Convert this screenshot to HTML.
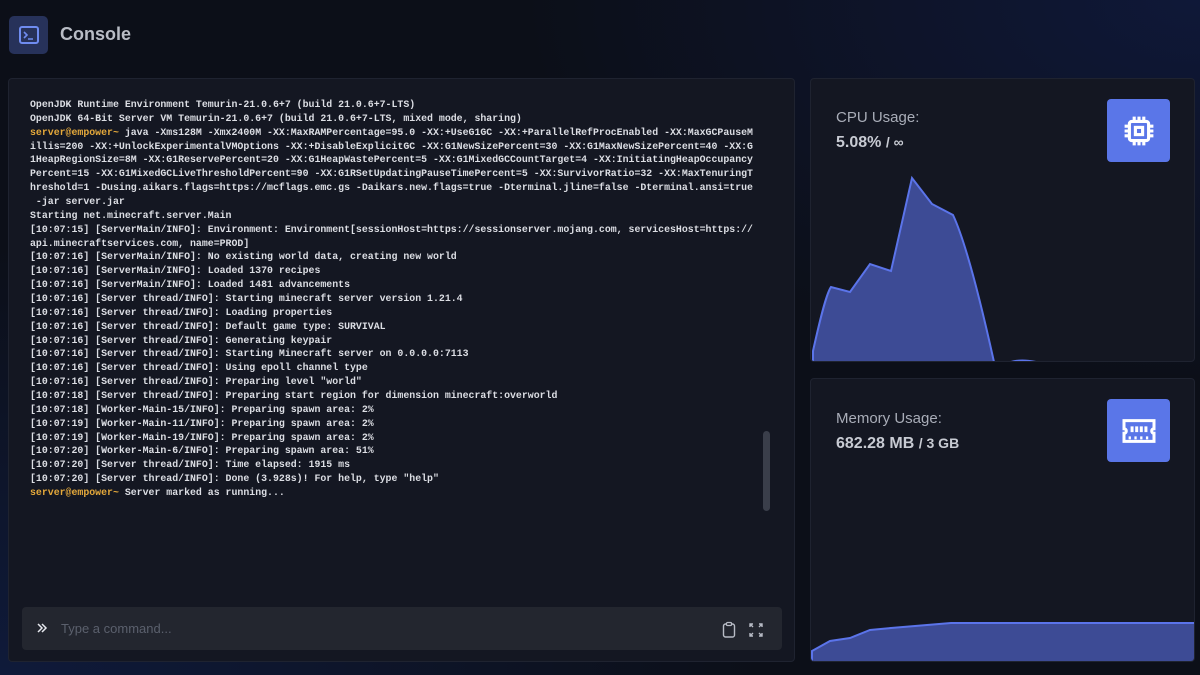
<!DOCTYPE html>
<html><head><meta charset="utf-8"><style>
*{margin:0;padding:0;box-sizing:border-box}
body{width:1200px;height:675px;overflow:hidden;position:relative;font-family:"Liberation Sans",sans-serif;
background:radial-gradient(ellipse at 0% 100%,#0f1a3a 0%,rgba(15,26,58,0) 45%),radial-gradient(ellipse at 100% 0%,#0f1838 0%,rgba(15,24,56,0) 40%),#0c0f18;}
.hicon{position:absolute;left:9px;top:16px;width:39px;height:38px;border-radius:5px;background:#27325a;display:flex;align-items:center;justify-content:center}
.title{position:absolute;left:60px;top:24px;font-size:18px;color:#b9bcc5;font-weight:bold}
.panel{position:absolute;background:#141722;border:1px solid #1f2330;border-radius:4px;overflow:hidden}
pre{position:absolute;left:30px;top:98px;font-family:"Liberation Mono",monospace;font-size:9.9px;line-height:13.86px;color:#dcdee4;font-weight:bold;white-space:pre}
.y{color:#e5a93b}
.input{position:absolute;left:22px;top:607px;width:760px;height:43px;background:#23262f;border-radius:4px}
.ph{position:absolute;left:39px;top:14px;font-size:13px;color:#5b606d}
.lbl{position:absolute;left:25px;font-size:15px;color:#a9adb8}
.val{position:absolute;left:25px;font-size:16px;color:#c8cbd3;font-weight:bold}
.val small{font-size:14px}
.ibox{position:absolute;left:296px;top:20px;width:63px;height:63px;background:#5a76e8;border-radius:4px;display:flex;align-items:center;justify-content:center}
</style></head><body>
<div class="hicon"><svg width="22" height="22" viewBox="0 0 22 22"><rect x="2" y="3" width="18" height="16" rx="2" fill="none" stroke="#6f8cf0" stroke-width="2"/><path d="M6 8l3 3-3 3M10 15h5" fill="none" stroke="#6f8cf0" stroke-width="1.6"/></svg></div>
<div class="title">Console</div>
<div class="panel" style="left:8px;top:78px;width:787px;height:584px">
<div style="position:absolute;left:754px;top:352px;width:7px;height:80px;border-radius:4px;background:#3a3e4a"></div>
</div>
<pre>OpenJDK Runtime Environment Temurin-21.0.6+7 (build 21.0.6+7-LTS)
OpenJDK 64-Bit Server VM Temurin-21.0.6+7 (build 21.0.6+7-LTS, mixed mode, sharing)
<span class="y">server@empower~</span> java -Xms128M -Xmx2400M -XX:MaxRAMPercentage=95.0 -XX:+UseG1GC -XX:+ParallelRefProcEnabled -XX:MaxGCPauseM
illis=200 -XX:+UnlockExperimentalVMOptions -XX:+DisableExplicitGC -XX:G1NewSizePercent=30 -XX:G1MaxNewSizePercent=40 -XX:G
1HeapRegionSize=8M -XX:G1ReservePercent=20 -XX:G1HeapWastePercent=5 -XX:G1MixedGCCountTarget=4 -XX:InitiatingHeapOccupancy
Percent=15 -XX:G1MixedGCLiveThresholdPercent=90 -XX:G1RSetUpdatingPauseTimePercent=5 -XX:SurvivorRatio=32 -XX:MaxTenuringT
hreshold=1 -Dusing.aikars.flags=https://mcflags.emc.gs -Daikars.new.flags=true -Dterminal.jline=false -Dterminal.ansi=true
 -jar server.jar
Starting net.minecraft.server.Main
[10:07:15] [ServerMain/INFO]: Environment: Environment[sessionHost=https://sessionserver.mojang.com, servicesHost=https://
api.minecraftservices.com, name=PROD]
[10:07:16] [ServerMain/INFO]: No existing world data, creating new world
[10:07:16] [ServerMain/INFO]: Loaded 1370 recipes
[10:07:16] [ServerMain/INFO]: Loaded 1481 advancements
[10:07:16] [Server thread/INFO]: Starting minecraft server version 1.21.4
[10:07:16] [Server thread/INFO]: Loading properties
[10:07:16] [Server thread/INFO]: Default game type: SURVIVAL
[10:07:16] [Server thread/INFO]: Generating keypair
[10:07:16] [Server thread/INFO]: Starting Minecraft server on 0.0.0.0:7113
[10:07:16] [Server thread/INFO]: Using epoll channel type
[10:07:16] [Server thread/INFO]: Preparing level "world"
[10:07:18] [Server thread/INFO]: Preparing start region for dimension minecraft:overworld
[10:07:18] [Worker-Main-15/INFO]: Preparing spawn area: 2%
[10:07:19] [Worker-Main-11/INFO]: Preparing spawn area: 2%
[10:07:19] [Worker-Main-19/INFO]: Preparing spawn area: 2%
[10:07:20] [Worker-Main-6/INFO]: Preparing spawn area: 51%
[10:07:20] [Server thread/INFO]: Time elapsed: 1915 ms
[10:07:20] [Server thread/INFO]: Done (3.928s)! For help, type "help"
<span class="y">server@empower~</span> Server marked as running...</pre>
<div class="input">
<svg style="position:absolute;left:14px;top:15px" width="12" height="12" viewBox="0 0 12 12"><path d="M2 2l4 4-4 4M6 2l4 4-4 4" fill="none" stroke="#e6e8ee" stroke-width="1.5"/></svg>
<div class="ph">Type a command...</div>
<svg style="position:absolute;left:699px;top:14px" width="16" height="17" viewBox="0 0 16 17"><rect x="2.5" y="3" width="11" height="13" rx="2" fill="none" stroke="#b8bcc6" stroke-width="1.4"/><rect x="5.5" y="1.5" width="5" height="3" rx="1" fill="#23262f" stroke="#b8bcc6" stroke-width="1.2"/></svg>
<svg style="position:absolute;left:726px;top:15px" width="16" height="16" viewBox="0 0 16 16"><path d="M2 5V2h3M11 2h3v3M14 11v3h-3M5 14H2v-3M2 2l3 3M14 2l-3 3M14 14l-3-3M2 14l3-3" fill="none" stroke="#b8bcc6" stroke-width="1.4"/></svg>
</div>
<div class="panel" style="left:810px;top:78px;width:385px;height:284px">
<div class="lbl" style="top:30px">CPU Usage:</div>
<div class="val" style="top:55px">5.08% <small>/ ∞</small></div>
<div class="ibox"><svg width="36" height="36" viewBox="0 0 30 30" fill="none" stroke="#fff" stroke-width="2.6"><rect x="7" y="7" width="16" height="16" rx="2"/><rect x="12" y="12" width="6" height="6"/><path d="M11 3v4M15 3v4M19 3v4M11 23v4M15 23v4M19 23v4M3 11h4M3 15h4M3 19h4M23 11h4M23 15h4M23 19h4"/></svg></div>
<svg style="position:absolute;left:0;top:0" width="385" height="284"><path d="M2 272 C8 245 15 215 20 208 L39 213 L59 185 L80 192 L101 99 L121 125 L142 136 Q158 170 183 283 L183 284 L2 284Z" fill="#3d4b95" stroke="#5b74ea" stroke-width="2"/><path d="M200 283 Q210 280 225 283" fill="none" stroke="#5b74ea" stroke-width="2"/></svg>
</div>
<div class="panel" style="left:810px;top:378px;width:385px;height:284px">
<div class="lbl" style="top:31px">Memory Usage:</div>
<div class="val" style="top:56px">682.28 MB <small>/ 3 GB</small></div>
<div class="ibox"><svg width="40" height="30" viewBox="0 0 34 26" fill="none" stroke="#fff" stroke-width="2.6"><path d="M4 4h26v7a2 2 0 0 0 0 4v7H4v-7a2 2 0 0 0 0-4z"/><path d="M11 9v5M15 9v5M19 9v5M23 9v5M8 19h2M13 19h2M18 19h2M23 19h2"/></svg></div>
<svg style="position:absolute;left:0;top:0" width="385" height="284"><path d="M1 272 L19 262 L39 259 L59 251 L80 249 L140 244 L385 244 L385 284 L1 284Z" fill="#3d4b95" stroke="#5b74ea" stroke-width="2"/></svg>
</div>
</body></html>
